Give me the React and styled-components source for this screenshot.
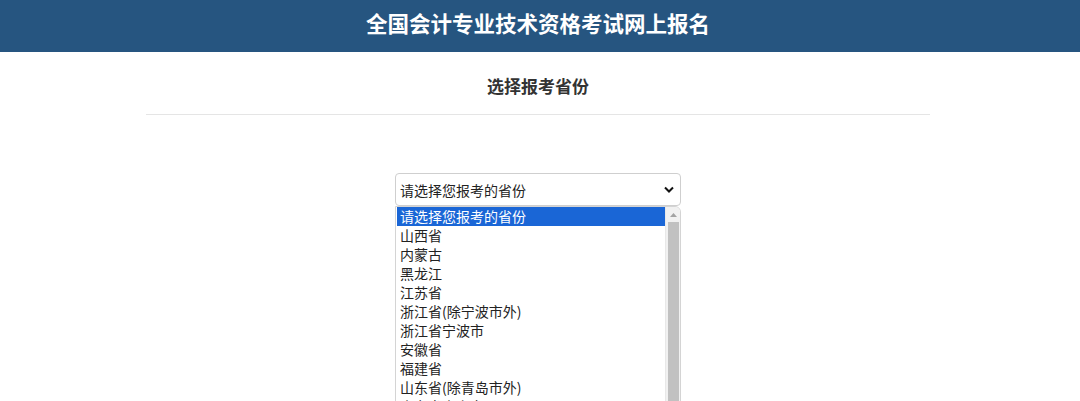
import React from "react";
import styled, { createGlobalStyle } from "styled-components";

const GlobalStyle = createGlobalStyle`
  html, body {
    margin: 0;
    padding: 0;
    background: #fff;
    font-family: "Noto Sans CJK SC", "Liberation Sans", sans-serif;
  }
`;

const Page = styled.div`
  height: 401px;
  overflow: hidden;
`;

const Header = styled.div`
  height: 52px;
  box-sizing: border-box;
  background-color: #265580;
  display: flex;
  justify-content: center;
  align-items: center;
  color: #fff;
  font-size: 21.5px;
  font-weight: 700;
  padding: 0 4px 7px 0;
`;

const Container = styled.div`
  width: 784px;
  margin: 0 auto;
  position: relative;
  left: -2px;
`;

const Title = styled.h2`
  margin: 0;
  height: 63px;
  box-sizing: border-box;
  padding-top: 5px;
  display: flex;
  justify-content: center;
  align-items: center;
  font-size: 17px;
  font-weight: 700;
  color: #333;
  border-bottom: 1px solid #e5e5e5;
`;

const Form = styled.div`
  display: flex;
  justify-content: center;
  padding-top: 58px;
`;

const SelectWrap = styled.div`
  width: 286px;
  display: flex;
  flex-direction: column;
`;

const SelectBox = styled.div`
  height: 31px;
  border: 1px solid #cfcfcf;
  border-radius: 4px;
  display: flex;
  align-items: center;
  justify-content: space-between;
  padding: 0 6px 0 4px;
  font-size: 14px;
  color: #222;
  background: #fff;
`;

const ListBox = styled.div`
  height: 240px;
  box-sizing: border-box;
  border: 1px solid #d4d4d4;
  border-radius: 0 6px 0 0;
  background: #fff;
  display: flex;
  overflow: hidden;
`;

const Options = styled.div`
  flex: 1;
  padding: 0 0 0 1px;
`;

const Option = styled.div`
  height: 19px;
  line-height: 19px;
  padding-left: 3px;
  font-size: 14px;
  color: ${({ selected }) => (selected ? "#fff" : "#222")};
  background: ${({ selected }) => (selected ? "#1a66d6" : "transparent")};
  white-space: nowrap;
`;

const ScrollTrack = styled.div`
  width: 14px;
  background: #f1f1f1;
  border-left: 1px solid #e8e8e8;
  display: flex;
  flex-direction: column;
  align-items: center;
`;

const ScrollArrow = styled.div`
  height: 15px;
  display: flex;
  align-items: center;
  justify-content: center;
`;

const ScrollThumb = styled.div`
  width: 11px;
  flex: 1;
  background: #c1c1c1;
`;

const provinces = [
  "请选择您报考的省份",
  "山西省",
  "内蒙古",
  "黑龙江",
  "江苏省",
  "浙江省(除宁波市外)",
  "浙江省宁波市",
  "安徽省",
  "福建省",
  "山东省(除青岛市外)",
  "山东省青岛市",
  "河南省",
];

export default function App() {
  return (
    <Page>
      <GlobalStyle />
      <Header>全国会计专业技术资格考试网上报名</Header>
      <Container>
        <Title>选择报考省份</Title>
        <Form>
          <SelectWrap>
            <SelectBox>
              <span>请选择您报考的省份</span>
              <svg width="10" height="7" viewBox="0 0 10 7">
                <path d="M1 1.5 L5 5.5 L9 1.5" fill="none" stroke="#111" strokeWidth="2" />
              </svg>
            </SelectBox>
            <ListBox>
              <Options>
                {provinces.map((p, i) => (
                  <Option key={p} selected={i === 0}>
                    {p}
                  </Option>
                ))}
              </Options>
              <ScrollTrack>
                <ScrollArrow>
                  <svg width="7" height="4" viewBox="0 0 7 4">
                    <path d="M0 4 L3.5 0 L7 4 Z" fill="#a3a3a3" />
                  </svg>
                </ScrollArrow>
                <ScrollThumb />
              </ScrollTrack>
            </ListBox>
          </SelectWrap>
        </Form>
      </Container>
    </Page>
  );
}
